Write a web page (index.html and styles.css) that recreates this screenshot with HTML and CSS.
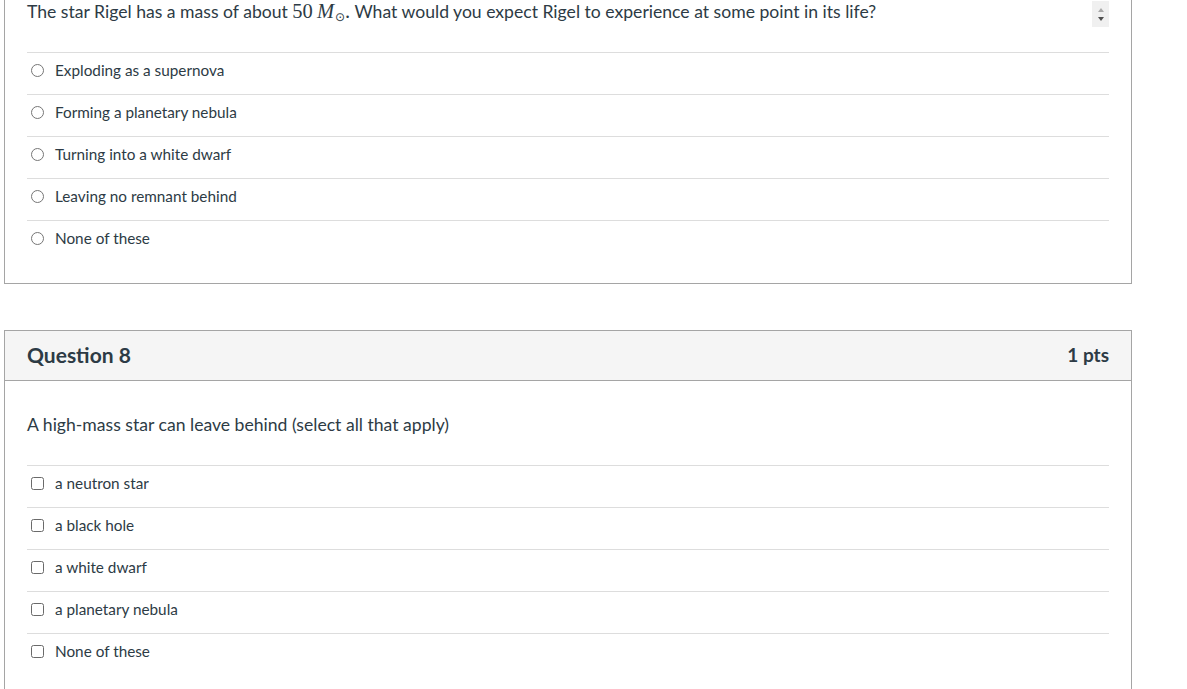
FILE: index.html
```html
<!DOCTYPE html>
<html lang="en">
<head>
<meta charset="utf-8">
<title>Quiz</title>
<link rel="stylesheet" href="styles.css">
</head>
<body>
<div class="page">
  <section class="card card-first">
    <div class="qbody">
      <div class="qtext">The star Rigel has a mass of about <span class="math">50&thinsp;<i class="mi">M</i><sub class="sun">⊙</sub>.</span> What would you expect Rigel to experience at some point in its life?</div>
      <ul class="answers">
        <li class="answer"><span class="radio"></span><span>Exploding as a supernova</span></li>
        <li class="answer"><span class="radio"></span><span>Forming a planetary nebula</span></li>
        <li class="answer"><span class="radio"></span><span>Turning into a white dwarf</span></li>
        <li class="answer"><span class="radio"></span><span>Leaving no remnant behind</span></li>
        <li class="answer"><span class="radio"></span><span>None of these</span></li>
      </ul>
    </div>
    <div class="spinner">
      <span class="tri up"></span>
      <span class="tri down"></span>
    </div>
  </section>

  <section class="card">
    <header class="qhead">
      <h2 class="qtitle">Question 8</h2>
      <span class="pts">1 pts</span>
    </header>
    <div class="qbody">
      <div class="qtext">A high-mass star can leave behind (select all that apply)</div>
      <ul class="answers">
        <li class="answer"><span class="check"></span><span>a neutron star</span></li>
        <li class="answer"><span class="check"></span><span>a black hole</span></li>
        <li class="answer"><span class="check"></span><span>a white dwarf</span></li>
        <li class="answer"><span class="check"></span><span>a planetary nebula</span></li>
        <li class="answer"><span class="check"></span><span>None of these</span></li>
      </ul>
    </div>
  </section>
</div>
</body>
</html>
```

FILE: styles.css
```css
html, body {
  margin: 0;
  padding: 0;
  background: #fff;
}
body {
  font-family: Lato, "Noto Sans", sans-serif;
  color: #2d3b45;
  overflow: hidden;
}
.page {
  width: 1128px;
  padding-left: 4px;
  display: flex;
  flex-direction: column;
  gap: 46px;
}
.card {
  position: relative;
  border: 1px solid #a5a5a5;
  background: #fff;
}
.card-first {
  margin-top: -33px;
}
.qbody {
  padding: 32px 22px 21px 22px;
}
.qtext {
  font-size: 17.6px;
  line-height: 24px;
  margin-bottom: 28px;
}
.math {
  font-family: "Liberation Serif", "DejaVu Serif", serif;
  font-size: 20.5px;
  line-height: 1;
}
.mi {
  font-style: italic;
}
.sun {
  font-size: 12px;
  vertical-align: -3px;
  line-height: 1;
  font-family: "DejaVu Sans", sans-serif;
  margin-left: 1px;
}
.answers {
  list-style: none;
  margin: 0;
  padding: 0;
}
.answer {
  display: flex;
  align-items: center;
  border-top: 1px solid #dddddd;
  padding: 7px 0 14px 4px;
  font-size: 15.3px;
  line-height: 20px;
  gap: 11px;
}
.radio {
  width: 11px;
  height: 11px;
  border: 1px solid #767676;
  border-radius: 50%;
  flex: none;
}
.check {
  width: 11px;
  height: 11px;
  border: 1px solid #6a6a6a;
  border-radius: 2.5px;
  flex: none;
}
.qhead {
  display: flex;
  justify-content: space-between;
  align-items: center;
  background: #f5f5f5;
  border-bottom: 1px solid #a5a5a5;
  height: 49px;
  padding: 0 22px 1px 22px;
  box-sizing: border-box;
  height: 50px;
}
.qtitle {
  margin: 0;
  font-size: 21px;
  font-weight: 700;
  line-height: 24px;
}
.pts {
  font-size: 19px;
  font-weight: 700;
  line-height: 24px;
}
.spinner {
  position: absolute;
  top: 33px;
  right: 22px;
  width: 17px;
  height: 26px;
  background: #f0f0f0;
  display: flex;
  flex-direction: column;
  align-items: center;
  justify-content: center;
  gap: 5px;
}
.tri {
  width: 0;
  height: 0;
  border-left: 3.5px solid transparent;
  border-right: 3.5px solid transparent;
}
.tri.up {
  border-bottom: 4px solid #a9a9a9;
}
.tri.down {
  border-top: 4px solid #505050;
}
```
